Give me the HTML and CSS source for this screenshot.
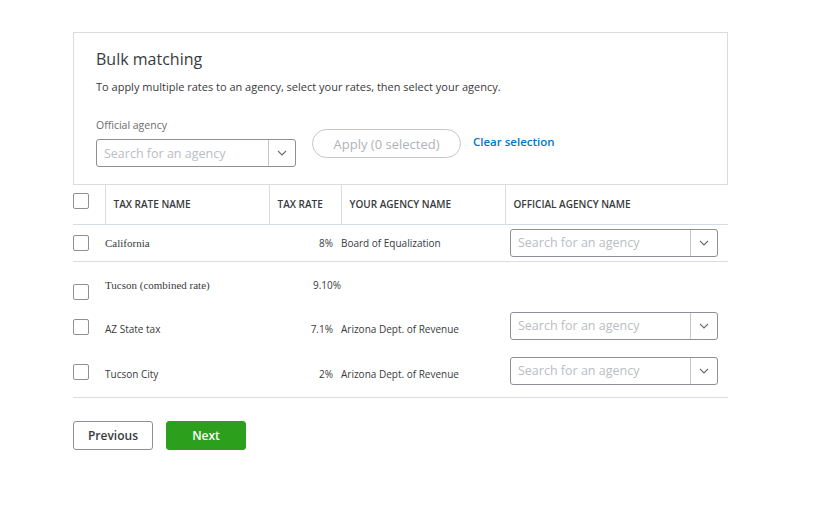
FILE: index.html
```html
<!DOCTYPE html>
<html lang="en">
<head>
    <meta charset="UTF-8">
    <title>Bulk matching</title>
    <link rel="stylesheet" href="styles.css">
</head>
<body>
    <div class="page">
        <!-- Bulk matching panel -->
        <div class="bulk-panel">
            <h2>Bulk matching</h2>
            <p class="intro">To apply multiple rates to an agency, select your rates, then select your agency.</p>
            <div class="bulk-row">
                <div class="field">
                    <label>Official agency</label>
                    <div class="select select-wide">
                        <span class="placeholder">Search for an agency</span>
                        <span class="chevron"><svg width="10" height="6" viewBox="0 0 10 6"><path d="M1 1l4 4 4-4" fill="none" stroke="#6b6c72" stroke-width="1.1"/></svg></span>
                    </div>
                </div>
                <button class="apply-button" disabled>Apply (0 selected)</button>
                <a href="#" class="clear-link">Clear selection</a>
            </div>
        </div>

        <!-- Rates table -->
        <table class="rates">
            <thead>
                <tr>
                    <th class="col-check"><span class="checkbox"></span></th>
                    <th class="col-name">TAX RATE NAME</th>
                    <th class="col-rate">TAX RATE</th>
                    <th class="col-agency">YOUR AGENCY NAME</th>
                    <th class="col-official">OFFICIAL AGENCY NAME</th>
                </tr>
            </thead>
            <tbody>
                <tr class="row-first">
                    <td class="col-check"><span class="checkbox"></span></td>
                    <td class="col-name serif">California</td>
                    <td class="col-rate">8%</td>
                    <td class="col-agency">Board of Equalization</td>
                    <td class="col-official">
                        <div class="select">
                            <span class="placeholder">Search for an agency</span>
                            <span class="chevron"><svg width="10" height="6" viewBox="0 0 10 6"><path d="M1 1l4 4 4-4" fill="none" stroke="#6b6c72" stroke-width="1.1"/></svg></span>
                        </div>
                    </td>
                </tr>
                <tr class="row-combined">
                    <td class="col-check"><span class="checkbox"></span></td>
                    <td class="col-name serif">Tucson (combined rate)</td>
                    <td class="col-rate flush">9.10%</td>
                    <td class="col-agency"></td>
                    <td class="col-official"></td>
                </tr>
                <tr class="row-sub">
                    <td class="col-check"><span class="checkbox"></span></td>
                    <td class="col-name">AZ State tax</td>
                    <td class="col-rate">7.1%</td>
                    <td class="col-agency">Arizona Dept. of Revenue</td>
                    <td class="col-official">
                        <div class="select">
                            <span class="placeholder">Search for an agency</span>
                            <span class="chevron"><svg width="10" height="6" viewBox="0 0 10 6"><path d="M1 1l4 4 4-4" fill="none" stroke="#6b6c72" stroke-width="1.1"/></svg></span>
                        </div>
                    </td>
                </tr>
                <tr class="row-sub row-last">
                    <td class="col-check"><span class="checkbox"></span></td>
                    <td class="col-name">Tucson City</td>
                    <td class="col-rate">2%</td>
                    <td class="col-agency">Arizona Dept. of Revenue</td>
                    <td class="col-official">
                        <div class="select">
                            <span class="placeholder">Search for an agency</span>
                            <span class="chevron"><svg width="10" height="6" viewBox="0 0 10 6"><path d="M1 1l4 4 4-4" fill="none" stroke="#6b6c72" stroke-width="1.1"/></svg></span>
                        </div>
                    </td>
                </tr>
            </tbody>
        </table>

        <div class="nav-buttons">
            <button class="prev-button">Previous</button>
            <button class="next-button">Next</button>
        </div>
    </div>
</body>
</html>
```

FILE: styles.css
```css
* {
    box-sizing: border-box;
    margin: 0;
    padding: 0;
}

body {
    background-color: #ffffff;
    color: #393a3d;
    font-family: 'Open Sans', 'Liberation Sans', sans-serif;
}

.page {
    width: 655px;
    margin-left: 73px;
    padding-top: 32px;
}

.bulk-panel {
    border: 1px solid #dcdcdc;
    padding: 14px 22px 16px;
    height: 153px;
}

.bulk-panel h2 {
    font-size: 16px;
    font-weight: 400;
    line-height: 24px;
    color: #393a3d;
}

.intro {
    font-size: 11px;
    line-height: 14px;
    margin-top: 9px;
    color: #393a3d;
}

.bulk-row {
    display: flex;
    align-items: flex-start;
    margin-top: 24px;
}

.field label {
    display: block;
    font-size: 10.5px;
    line-height: 14px;
    color: #6b6c72;
    margin-bottom: 7px;
}

.select {
    display: flex;
    align-items: stretch;
    width: 208px;
    height: 28px;
    border: 1px solid #8d9096;
    border-radius: 3px;
    background: #fff;
}

.select-wide {
    width: 200px;
}

.placeholder {
    flex: 1;
    display: flex;
    align-items: center;
    padding-left: 7px;
    font-size: 12.5px;
    color: #babdc3;
    white-space: nowrap;
}

.chevron {
    width: 27px;
    display: flex;
    align-items: center;
    justify-content: center;
    border-left: 1px solid #c4c6ca;
}

.apply-button {
    margin-left: 16px;
    margin-top: 11px;
    width: 149px;
    height: 29px;
    border: 1px solid #c4c6ca;
    border-radius: 15px;
    background: #fff;
    color: #b0b3b9;
    font-family: inherit;
    font-size: 13px;
}

.clear-link {
    margin-left: 12px;
    margin-top: 16px;
    font-size: 11.5px;
    font-weight: 600;
    color: #0077c5;
    text-decoration: none;
}

/* table */

.rates {
    width: 655px;
    border-collapse: collapse;
    table-layout: fixed;
    font-size: 10px;
    color: #393a3d;
}

.rates th {
    height: 39px;
    text-align: left;
    font-size: 10px;
    font-weight: 600;
    padding-left: 8px;
    border-left: 1px solid #d4dde6;
    border-bottom: 1px solid #d4dde6;
    vertical-align: middle;
}

.rates th.col-check {
    border-left: none;
    padding-left: 0;
    vertical-align: top;
    padding-top: 8px;
}

.col-check { width: 32px; }
.col-name { width: 164px; }
.col-rate { width: 72px; }
.col-agency { width: 164px; }
.col-official { width: 223px; }

.checkbox {
    display: block;
    width: 16px;
    height: 16px;
    border: 1px solid #8d9096;
    border-radius: 2px;
    background: #fff;
}

.rates td {
    vertical-align: middle;
    white-space: nowrap;
}

.rates td.col-rate {
    text-align: right;
    padding-right: 8px;
}

.rates td.col-rate.flush {
    padding-right: 0;
}

.rates td.col-official {
    padding-left: 5px;
}

.serif {
    font-family: 'Liberation Serif', serif;
    font-size: 11px;
}

.row-first td {
    height: 37px;
    border-bottom: 1px solid #dcdcdc;
}

/* lower rows line their contents up from the top */
.row-combined td,
.row-sub td {
    vertical-align: top;
    padding-top: 15px;
    line-height: 16px;
}

.row-combined td {
    height: 44px;
}

.row-combined td.col-check {
    padding-top: 22px;
}

.row-sub td {
    height: 45px;
    padding-top: 16px;
}

.row-sub td.col-check {
    padding-top: 14px;
}

.row-sub td.col-official {
    padding-top: 7px;
}

.row-last td {
    height: 47px;
    border-bottom: 1px solid #dcdcdc;
}

/* buttons */

.nav-buttons {
    display: flex;
    gap: 13px;
    margin-top: 23px;
}

.nav-buttons button {
    width: 80px;
    height: 29px;
    border-radius: 3px;
    font-family: inherit;
    font-size: 12px;
    font-weight: 600;
    cursor: pointer;
}

.prev-button {
    background: #fff;
    border: 1px solid #8d9096;
    color: #393a3d;
}

.next-button {
    background: #2ca01c;
    border: 1px solid #2ca01c;
    color: #fff;
    font-weight: 700;
}
```
